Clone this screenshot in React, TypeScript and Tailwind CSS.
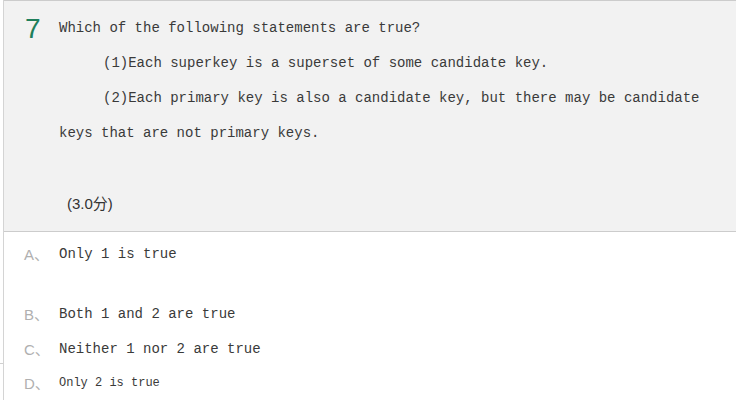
import React from 'react';

interface Option {
  key: string;
  text: string;
  small?: boolean;
}

const options: Option[] = [
  { key: 'A', text: 'Only 1 is true' },
  { key: 'B', text: 'Both 1 and 2 are true' },
  { key: 'C', text: 'Neither 1 nor 2 are true' },
  { key: 'D', text: 'Only 2 is true', small: true },
];

const mono = { fontFamily: '"Liberation Mono", "Courier New", monospace' };
const sans = { fontFamily: '"Liberation Sans", "Noto Sans CJK SC", sans-serif' };

const App: React.FC = () => {
  return (
    <div className="relative w-[736px] h-[400px] overflow-hidden bg-white">
      {/* little tick on the left edge */}
      <div className="absolute left-0 top-[363px] w-[3px] h-px bg-[#d0d0d0]" />
      <div className="ml-[3px] h-full border-l border-[#d4d4d4]">
        {/* question block */}
        <div className="bg-[#f2f2f2] border-t border-b border-[#cccccc] pt-[10px] pb-[17px]">
          <div className="flex">
            <div className="w-[55px] pl-[21px] shrink-0">
              <div className="leading-[35px] text-[28px] text-[#1f7f5b]" style={sans}>7</div>
            </div>
            <div className="text-[14px] text-[#3a3a3a] leading-[35px]" style={mono}>
              <div>Which of the following statements are true?</div>
              <div className="pl-[44px]">(1)Each superkey is a superset of some candidate key.</div>
              <div className="pl-[44px]">(2)Each primary key is also a candidate key, but there may be candidate</div>
              <div>keys that are not primary keys.</div>
              <div className="pl-[8px] mt-[43px] leading-[20px] text-[15px] text-[#333333]" style={sans}>
                (3.0分)
              </div>
            </div>
          </div>
        </div>

        {/* options */}
        <div className="pt-[5px]">
          {options.map((o, i) => (
            <div key={o.key} className={`flex leading-[35px] ${i === 0 ? 'mb-[25px]' : ''} ${i === 3 ? 'h-[34px] -mt-px' : ''}`}>
              <div className="w-[55px] pl-[20px] shrink-0 text-[15px] text-[#b0b0b0]" style={sans}>
                {o.key}、
              </div>
              <div className={`${o.small ? 'text-[12px]' : 'text-[14px]'} text-[#3a3a3a]`} style={mono}>
                {o.text}
              </div>
            </div>
          ))}
        </div>
      </div>
    </div>
  );
};

export default App;
